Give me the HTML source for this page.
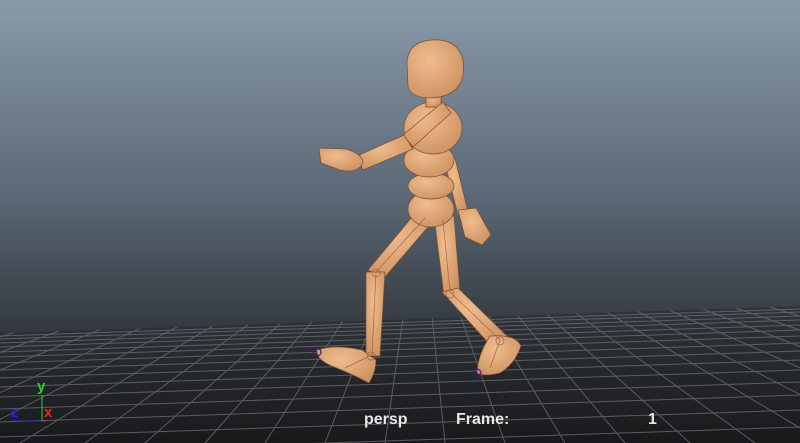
<!DOCTYPE html>
<html><head><style>
html,body{margin:0;padding:0;width:800px;height:443px;overflow:hidden;background:#222}
svg{display:block;position:absolute;left:0;top:0}
text{font-family:"Liberation Sans",sans-serif;font-weight:bold}
</style></head><body>
<svg width="800" height="443" viewBox="0 0 800 443">
<defs>
<linearGradient id="bg" x1="0" y1="0" x2="0" y2="1">
<stop offset="0" stop-color="#8a9aab"/>
<stop offset="0.45" stop-color="#5a6774"/>
<stop offset="0.75" stop-color="#32383e"/>
<stop offset="1" stop-color="#1a1b1d"/>
</linearGradient>
<linearGradient id="fl" x1="0" y1="0" x2="0" y2="1">
<stop offset="0" stop-color="#30353a"/>
<stop offset="1" stop-color="#18191a"/>
</linearGradient>
<radialGradient id="sk" cx="0.4" cy="0.35" r="0.8">
<stop offset="0" stop-color="#f0bd8e"/>
<stop offset="1" stop-color="#c98c5c"/>
</radialGradient>
<clipPath id="floor"><polygon points="0,333 800,306 800,443 0,443"/></clipPath>
</defs>
<rect width="800" height="443" fill="url(#bg)"/>
<polygon points="0,333 800,306 800,443 0,443" fill="url(#fl)"/>
<g clip-path="url(#floor)" stroke="#6e7276" stroke-width="1" fill="none" opacity="0.75">
<line x1="0" y1="336" x2="800" y2="309"/>
<line x1="0" y1="339" x2="800" y2="312"/>
<line x1="0" y1="343" x2="800" y2="316"/>
<line x1="0" y1="347" x2="800" y2="320"/>
<line x1="0" y1="352" x2="800" y2="325"/>
<line x1="0" y1="357" x2="800" y2="330"/>
<line x1="0" y1="363" x2="800" y2="336"/>
<line x1="0" y1="370" x2="800" y2="343"/>
<line x1="0" y1="378" x2="800" y2="351"/>
<line x1="0" y1="387" x2="800" y2="360"/>
<line x1="0" y1="397" x2="800" y2="370"/>
<line x1="0" y1="409" x2="800" y2="382"/>
<line x1="0" y1="422" x2="800" y2="395"/>
<line x1="0" y1="437" x2="800" y2="410"/>
<line x1="0" y1="454" x2="800" y2="427"/>
<line x1="0" y1="473" x2="800" y2="446"/>
<line x1="420" y1="200" x2="-640" y2="443"/><line x1="420" y1="200" x2="-560" y2="443"/>
<line x1="420" y1="200" x2="-480" y2="443"/><line x1="420" y1="200" x2="-400" y2="443"/>
<line x1="420" y1="200" x2="-325" y2="443"/><line x1="420" y1="200" x2="-250" y2="443"/>
<line x1="420" y1="200" x2="-180" y2="443"/><line x1="420" y1="200" x2="-110" y2="443"/>
<line x1="420" y1="200" x2="-45" y2="443"/><line x1="420" y1="200" x2="20" y2="443"/>
<line x1="420" y1="200" x2="85" y2="443"/><line x1="420" y1="200" x2="145" y2="443"/>
<line x1="420" y1="200" x2="205" y2="443"/><line x1="420" y1="200" x2="265" y2="443"/>
<line x1="420" y1="200" x2="325" y2="443"/><line x1="420" y1="200" x2="385" y2="443"/>
<line x1="420" y1="200" x2="445" y2="443"/><line x1="420" y1="200" x2="505" y2="443"/>
<line x1="420" y1="200" x2="565" y2="443"/><line x1="420" y1="200" x2="625" y2="443"/>
<line x1="420" y1="200" x2="690" y2="443"/><line x1="420" y1="200" x2="755" y2="443"/>
<line x1="420" y1="200" x2="825" y2="443"/><line x1="420" y1="200" x2="895" y2="443"/>
<line x1="420" y1="200" x2="970" y2="443"/><line x1="420" y1="200" x2="1050" y2="443"/>
<line x1="420" y1="200" x2="1130" y2="443"/><line x1="420" y1="200" x2="1215" y2="443"/>
<line x1="420" y1="200" x2="1305" y2="443"/><line x1="420" y1="200" x2="1400" y2="443"/>
<line x1="420" y1="200" x2="1500" y2="443"/><line x1="420" y1="200" x2="1610" y2="443"/>
</g>
<g fill="url(#sk)" stroke="#7a4e32" stroke-width="0.7" stroke-linejoin="round">
<!-- back leg -->
<path d="M434,216 L454,216 L460,292 L444,296 Z"/>
<path d="M442,292 L458,288 L507,336 L493,348 Z"/>
<path d="M490,336 Q516,334 521,346 Q515,364 500,373 Q484,377 477,373 Q478,354 490,336 Z"/>
<!-- back arm -->
<path d="M444,160 L455,158 L468,212 L458,215 Z"/>
<path d="M458,210 L476,208 L491,235 L482,245 L465,237 Z"/>
<!-- front leg -->
<path d="M418,210 L434,220 L384,278 L368,270 Z"/>
<path d="M366,272 L385,272 L380,356 L366,356 Z"/>
<path d="M317,350 Q335,344 362,350 L376,360 Q376,372 369,383 Q350,373 334,367 Q316,360 317,350 Z"/>
<!-- torso -->
<ellipse cx="431" cy="209" rx="23" ry="18"/>
<ellipse cx="431" cy="186" rx="23" ry="13"/>
<ellipse cx="429" cy="160" rx="25" ry="17"/>
<ellipse cx="433" cy="128" rx="29" ry="26"/>
<path d="M426,93 L441,93 L441,107 L426,107 Z"/>
<path d="M407,62 Q409,38 440,40 Q467,44 463,75 Q459,96 432,98 Q410,98 408,86 Z"/>
<!-- front arm -->
<path d="M443,102 L451,113 L413,147 L403,135 Z"/>
<path d="M404,135 L413,149 L363,170 L357,156 Z"/>
<path d="M319,148 L346,149 Q363,154 363,163 Q357,174 340,170 L321,163 Z"/>
</g>
<g fill="none" stroke="#a0543a" stroke-width="0.7" opacity="0.85">
<path d="M425,218 L376,272 L372,355 L345,368"/><path d="M443,220 L450,292 L500,340 L490,368"/>
<circle cx="376" cy="273" r="4"/><circle cx="450" cy="294" r="4"/><circle cx="371" cy="356" r="4"/><circle cx="500" cy="341" r="4"/>
</g>
<circle cx="317" cy="352" r="4" fill="none" stroke="#3a1a90" stroke-width="1.2"/>
<circle cx="477" cy="373" r="4" fill="none" stroke="#3a1a90" stroke-width="1.2"/>
<line x1="42" y1="395" x2="42" y2="421" stroke="#3c3" stroke-width="1"/>
<line x1="14" y1="421" x2="42" y2="421" stroke="#33c" stroke-width="1"/>
<line x1="42" y1="421" x2="46" y2="421" stroke="#c33" stroke-width="1"/>
<text x="37" y="391" font-size="15" fill="#3c3">y</text>
<text x="11" y="417" font-size="15" fill="#22e">z</text>
<text x="44" y="417" font-size="15" fill="#e22">x</text>
<text x="364" y="424" font-size="16" fill="#e8e8e8">persp</text>
<text x="456" y="424" font-size="16" fill="#e8e8e8">Frame:</text>
<text x="648" y="424" font-size="16" fill="#e8e8e8">1</text>
</svg>
</body></html>
